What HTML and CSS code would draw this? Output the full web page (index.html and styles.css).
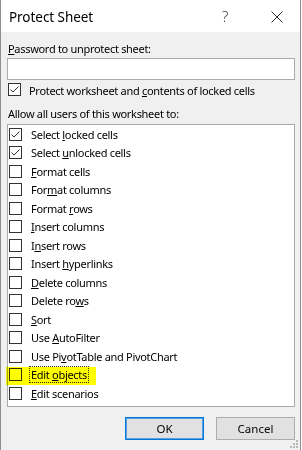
FILE: index.html
```html
<!DOCTYPE html>
<html>
<head>
<meta charset="utf-8">
<link rel="stylesheet" href="styles.css">
</head>
<body>
<div class="window">
  <div class="titlebar">
    <span class="title">Protect Sheet</span>
    <span class="help">?</span>
    <span class="close">
      <svg width="12" height="12" viewBox="0 0 12 12"><path d="M0.5 0.5 L11.5 11.5 M11.5 0.5 L0.5 11.5" stroke="#333" stroke-width="1" fill="none"/></svg>
    </span>
  </div>
  <div class="content">
    <div class="pw-label"><u>P</u>assword to unprotect sheet:</div>
    <div class="input"></div>
    <div class="check-row">
      <span class="box checked"><svg width="11" height="11" viewBox="0 0 11 11"><path d="M1.5 5.5 L4 8 L9.5 2.5" stroke="#333" stroke-width="1" fill="none"/></svg></span>
      <span class="check-text">Protect worksheet and <u>c</u>ontents of locked cells</span>
    </div>
    <div class="allow-label">Allow all users of this worksheet to:</div>
    <div class="list">
      <div class="row"><span class="box"><svg width="11" height="11" viewBox="0 0 11 11"><path d="M1.5 5.5 L4 8 L9.5 2.5" stroke="#333" stroke-width="1" fill="none"/></svg></span><span class="row-text">Select <u>l</u>ocked cells</span></div>
      <div class="row"><span class="box"><svg width="11" height="11" viewBox="0 0 11 11"><path d="M1.5 5.5 L4 8 L9.5 2.5" stroke="#333" stroke-width="1" fill="none"/></svg></span><span class="row-text">Select <u>u</u>nlocked cells</span></div>
      <div class="row"><span class="box"></span><span class="row-text"><u>F</u>ormat cells</span></div>
      <div class="row"><span class="box"></span><span class="row-text">For<u>m</u>at columns</span></div>
      <div class="row"><span class="box"></span><span class="row-text">Format <u>r</u>ows</span></div>
      <div class="row"><span class="box"></span><span class="row-text"><u>I</u>nsert columns</span></div>
      <div class="row"><span class="box"></span><span class="row-text">I<u>n</u>sert rows</span></div>
      <div class="row"><span class="box"></span><span class="row-text">Insert <u>h</u>yperlinks</span></div>
      <div class="row"><span class="box"></span><span class="row-text"><u>D</u>elete columns</span></div>
      <div class="row"><span class="box"></span><span class="row-text">Delete ro<u>w</u>s</span></div>
      <div class="row"><span class="box"></span><span class="row-text"><u>S</u>ort</span></div>
      <div class="row"><span class="box"></span><span class="row-text">Use <u>A</u>utoFilter</span></div>
      <div class="row"><span class="box"></span><span class="row-text">Use Pi<u>v</u>otTable and PivotChart</span></div>
      <div class="row focus-row"><span class="box"></span><span class="row-text focus">Edit <u>o</u>bjects</span><span class="highlight"></span></div>
      <div class="row"><span class="box"></span><span class="row-text"><u>E</u>dit scenarios</span></div>
    </div>
    <div class="buttons">
      <div class="btn ok">OK</div>
      <div class="btn">Cancel</div>
    </div>
  </div>
  <svg class="grip" width="9" height="9" viewBox="0 0 9 9">
    <rect x="6" y="0" width="2" height="2" fill="#b8b8b8"/>
    <rect x="3" y="3" width="2" height="2" fill="#b8b8b8"/>
    <rect x="6" y="3" width="2" height="2" fill="#b8b8b8"/>
    <rect x="0" y="6" width="2" height="2" fill="#b8b8b8"/>
    <rect x="3" y="6" width="2" height="2" fill="#b8b8b8"/>
    <rect x="6" y="6" width="2" height="2" fill="#b8b8b8"/>
  </svg>
</div>
</body>
</html>
```

FILE: styles.css
```css
html, body {
  margin: 0;
  padding: 0;
  background: #ffffff;
}
body {
  font-family: "Noto Sans", "Open Sans", sans-serif;
  font-size: 11px;
  letter-spacing: -0.3px;
  color: #000;
}
.window {
  position: relative;
  width: 301px;
  height: 450px;
  box-sizing: border-box;
  border-left: 1px solid #8e8e8e;
  border-right: 1px solid #8e8e8e;
  background: #f0f0f0;
  display: flex;
  flex-direction: column;
  overflow: hidden;
}
.titlebar {
  height: 32px;
  background: #fff;
  display: flex;
  align-items: center;
  flex: none;
}
.title {
  padding-left: 8px;
  font-size: 13.5px;
  letter-spacing: -0.05px;
  color: #000;
  flex: 1;
  padding-top: 1px;
}
.help {
  width: 40px;
  margin-right: 8px;
  text-align: center;
  font-size: 15px;
  font-weight: 300;
  color: #444;
}
.close {
  width: 47px;
  display: flex;
  justify-content: center;
  padding-top: 2px;
}
.content {
  padding: 0 5px 0 6px;
  display: flex;
  flex-direction: column;
}
.pw-label {
  padding-top: 9px;
  line-height: 16px;
  padding-left: 1px;
}
.input {
  margin-top: 1px;
  height: 22px;
  box-sizing: border-box;
  border: 1px solid #ababab;
  background: #fff;
}
.check-row {
  height: 19px;
  display: flex;
  align-items: center;
  padding-left: 1px;
}
.box {
  width: 13px;
  height: 13px;
  box-sizing: border-box;
  border: 1px solid #333;
  background: #fff;
  display: flex;
  align-items: center;
  justify-content: center;
  flex: none;
}
.box svg {
  display: block;
}
.check-text {
  margin-left: 8px;
  padding-top: 1px;
}
.allow-label {
  padding-top: 7px;
  padding-bottom: 2px;
  line-height: 16px;
  padding-left: 1px;
}
.list {
  height: 283px;
  box-sizing: border-box;
  border: 1px solid #a9a9a9;
  background: #fff;
}
.row {
  position: relative;
  height: 18.5px;
  display: flex;
  align-items: center;
  padding-left: 1px;
}
.row-text {
  margin-left: 7px;
  padding: 0 1px;
  line-height: 15px;
  border: 1px solid transparent;
}
.row-text.focus {
  border: 1px dotted #333;
}
.highlight {
  position: absolute;
  left: -2px;
  top: 1px;
  width: 90px;
  height: 18px;
  background: #ffff00;
  mix-blend-mode: multiply;
}
.buttons {
  margin-top: 10px;
  display: flex;
  justify-content: flex-end;
  gap: 12px;
}
.btn {
  width: 79px;
  height: 23px;
  box-sizing: border-box;
  border: 1px solid #adadad;
  background: #e1e1e1;
  display: flex;
  align-items: center;
  justify-content: center;
  letter-spacing: 0;
  font-size: 11.5px;
}
.btn.ok {
  width: 79px;
  border: 1px solid #0078d7;
  box-shadow: inset 0 0 0 1px #5aa0e0;
}
.grip {
  position: absolute;
  right: 1px;
  bottom: 1px;
}
```
